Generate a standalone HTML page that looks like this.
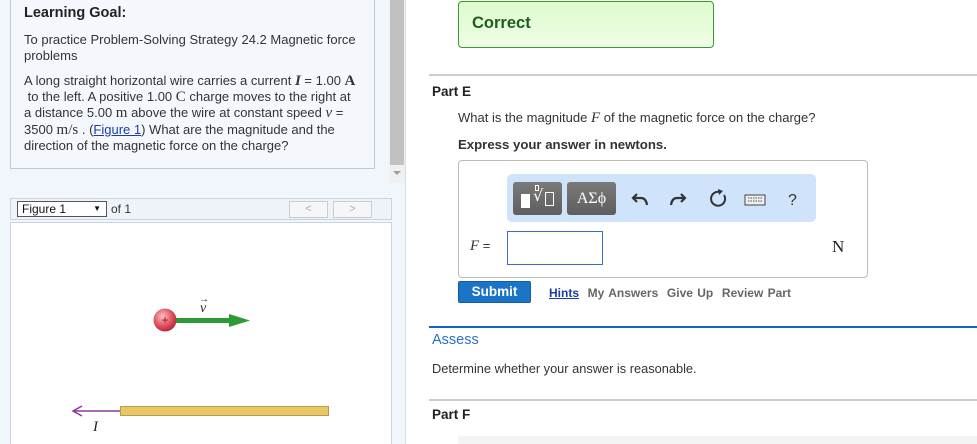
<!DOCTYPE html>
<html><head><style>
*{margin:0;padding:0;box-sizing:border-box}
html,body{width:977px;height:444px;overflow:hidden}
body{position:relative;font-family:"Liberation Sans",Arial,sans-serif;background:#fff;color:#333}
.a{position:absolute}
.m{font-family:"Liberation Serif",serif}
</style></head><body>
<div class="a" style="left:0;top:0;width:406px;height:444px;background:#f1f6fd;border-right:1px solid #d4dde8"></div>
<div class="a" style="left:10px;top:-2px;width:365px;height:171px;background:#f4f8fd;border:1px solid #bccbdc"></div>
<div class="a" style="left:24px;top:5px;font-size:14.5px;font-weight:bold;color:#222">Learning Goal:</div>
<div class="a" style="left:24px;top:32px;width:350px;font-size:13px;line-height:16px;color:#333;white-space:nowrap">To practice Problem-Solving Strategy 24.2 Magnetic force<br>problems</div>
<div class="a" style="left:24px;top:73px;width:350px;font-size:13px;line-height:16.2px;color:#333;white-space:nowrap">A long straight horizontal wire carries a current <i class="m" style="font-size:15px;font-weight:bold">I</i> = 1.00 <b class="m" style="font-size:15px">A</b><br>&nbsp;to the left. A positive 1.00 <b class="m" style="font-size:15px;font-weight:normal">C</b> charge moves to the right at<br>a distance 5.00 <span class="m" style="font-size:15px">m</span> above the wire at constant speed <i class="m" style="font-size:15px">v</i> =<br>3500 <span class="m" style="font-size:15px">m/s</span> . (<u style="color:#1a3da8">Figure 1</u>) What are the magnitude and the<br>direction of the magnetic force on the charge?</div>
<div class="a" style="left:389px;top:0;width:16px;height:183px;background:#f0f0f0"></div>
<div class="a" style="left:390px;top:0;width:14px;height:165px;background:#c1c1c1"></div>
<div class="a" style="left:393px;top:171px;width:0;height:0;border-left:4px solid transparent;border-right:4px solid transparent;border-top:4px solid #a0a0a0"></div>
<div class="a" style="left:10px;top:198px;width:382px;height:22px;background:#eef3fa;border:1px solid #c8d4e2"></div>
<div class="a" style="left:17px;top:201px;width:90px;height:16px;background:#fff;border:1px solid #555;font-size:12px;padding-left:4px;line-height:14px;color:#111">Figure 1<span style="position:absolute;right:5px;font-size:8px">▼</span></div>
<div class="a" style="left:111px;top:202px;font-size:12px;color:#333">of 1</div>
<div class="a" style="left:289px;top:201px;width:39px;height:17px;border:1px solid #ccc;background:#f4f6f9;color:#aaa;font-size:11px;text-align:center;line-height:15px">&lt;</div>
<div class="a" style="left:333px;top:201px;width:39px;height:17px;border:1px solid #ccc;background:#f4f6f9;color:#aaa;font-size:11px;text-align:center;line-height:15px">&gt;</div>
<div class="a" style="left:10px;top:222px;width:382px;height:230px;background:#fff;border:1px solid #c8d4e2"></div>
<svg class="a" style="left:0;top:280px" width="400" height="164">
<defs><radialGradient id="g" cx="0.4" cy="0.35" r="0.7"><stop offset="0" stop-color="#f8c0c0"/><stop offset="0.6" stop-color="#e05060"/><stop offset="1" stop-color="#b02030"/></radialGradient></defs>
<rect x="176" y="38" width="56" height="5" fill="#2e9a36"/>
<polygon points="229,34 250,40.5 229,47" fill="#2e9a36"/>
<circle cx="165" cy="40" r="11.5" fill="url(#g)"/>
<text x="165" y="44" font-size="12" fill="#a01020" text-anchor="middle" font-family="Liberation Sans">+</text>
<text x="200" y="32" font-size="14" font-style="italic" font-family="Liberation Serif" fill="#222">v</text>
<text x="199" y="22" font-size="10" font-family="Liberation Sans" fill="#222">→</text>
<rect x="120.5" y="126.5" width="208" height="9" fill="#e8c865" stroke="#b89c4c"/>
<line x1="74" y1="131" x2="120" y2="131" stroke="#8a3a9a" stroke-width="1.5"/>
<polyline points="82,126 73,131 82,136" fill="none" stroke="#8a3a9a" stroke-width="1.5"/>
<text x="93" y="151" font-size="15" font-style="italic" font-family="Liberation Serif" fill="#222">I</text>
</svg>
<div class="a" style="left:458px;top:1px;width:256px;height:47px;border:1px solid #3a9a30;border-radius:4px;background:linear-gradient(#defbcd,#eefde6)"></div>
<div class="a" style="left:472px;top:14px;font-size:16.5px;font-weight:bold;color:#1f5c1f">Correct</div>
<div class="a" style="left:429px;top:74px;width:548px;height:2px;background:#ccc"></div>
<div class="a" style="left:432px;top:84px;font-size:13.5px;font-weight:bold;color:#222">Part E</div>
<div class="a" style="left:458px;top:110px;font-size:13px;color:#333;white-space:nowrap">What is the magnitude <i class="m" style="font-size:15px">F</i> of the magnetic force on the charge?</div>
<div class="a" style="left:458px;top:137px;font-size:13.2px;font-weight:bold;color:#333">Express your answer in newtons.</div>
<div class="a" style="left:458px;top:160px;width:410px;height:118px;border:1px solid #bbb;border-radius:4px"></div>
<div class="a" style="left:507px;top:174px;width:309px;height:48px;background:#cfe4fb;border-radius:5px"></div>
<div class="a" style="left:513px;top:182px;width:49px;height:33px;background:linear-gradient(#7a7a7a,#5e5e5e);border-radius:3px;color:#fff">
<div class="a" style="left:8px;top:12px;width:9px;height:14px;background:#fff"></div>
<div class="a" style="left:20px;top:4px;font-size:16px;font-family:'DejaVu Sans'">√</div><div class="a" style="left:32px;top:10px;width:9px;height:14px;border:1px solid #fff"></div><div class="a" style="left:22px;top:3px;width:4px;height:6px;border:1px solid #fff"></div></div>
<div class="a" style="left:567px;top:182px;width:49px;height:33px;background:linear-gradient(#7a7a7a,#5e5e5e);border-radius:3px;color:#fff;font-family:'Liberation Serif',serif;font-size:16px;text-align:center;line-height:33px">ΑΣϕ</div>
<svg class="a" style="left:630px;top:184px" width="180" height="30">
<path d="M7 10 L3 14 L7 18 M3 14 H11 Q16 14 17 21" fill="none" stroke="#333" stroke-width="2.2"/>
<path d="M51 10 L55 14 L51 18 M55 14 H47 Q42 14 41 21" fill="none" stroke="#333" stroke-width="2.2"/>
<path d="M90 8 A7 7 0 1 0 94 11" fill="none" stroke="#333" stroke-width="2"/><polygon points="88,5 93,7 89,11" fill="#333"/>
<rect x="115" y="11" width="20" height="10" fill="#eee" stroke="#444"/><path d="M118 14h14M118 17h14" stroke="#555" stroke-dasharray="1.5 1"/>
<text x="158" y="21" font-size="16" font-family="Liberation Sans" fill="#333">?</text>
</svg>
<div class="a" style="left:470px;top:238px;font-size:13px;color:#333"><i class="m" style="font-size:15px">F</i> =</div>
<div class="a" style="left:507px;top:231px;width:96px;height:34px;border:1px solid #3b6fc6"></div>
<div class="a m" style="left:832px;top:237px;font-size:17px;color:#222">N</div>
<div class="a" style="left:458px;top:281px;width:73px;height:22px;background:#1b74c6;border:1px solid #155ea0;border-radius:2px;color:#fff;font-size:13.5px;font-weight:bold;text-align:center;line-height:20px">Submit</div>
<div class="a" style="left:549px;top:286px;font-size:12px;font-weight:bold;color:#666;word-spacing:1px"><u style="color:#1a3da8">Hints</u>&nbsp; My Answers&nbsp; Give Up&nbsp; Review Part</div>
<div class="a" style="left:429px;top:326px;width:548px;height:2px;background:#0a66c8"></div>
<div class="a" style="left:432px;top:332px;font-size:14.5px;color:#2a6fd0">Assess</div>
<div class="a" style="left:432px;top:361px;font-size:12.8px;color:#333">Determine whether your answer is reasonable.</div>
<div class="a" style="left:429px;top:399px;width:548px;height:2px;background:#ccc"></div>
<div class="a" style="left:432px;top:407px;font-size:13.5px;font-weight:bold;color:#222">Part F</div>
<div class="a" style="left:458px;top:436px;width:519px;height:10px;background:#f4f4f4"></div>
</body></html>
